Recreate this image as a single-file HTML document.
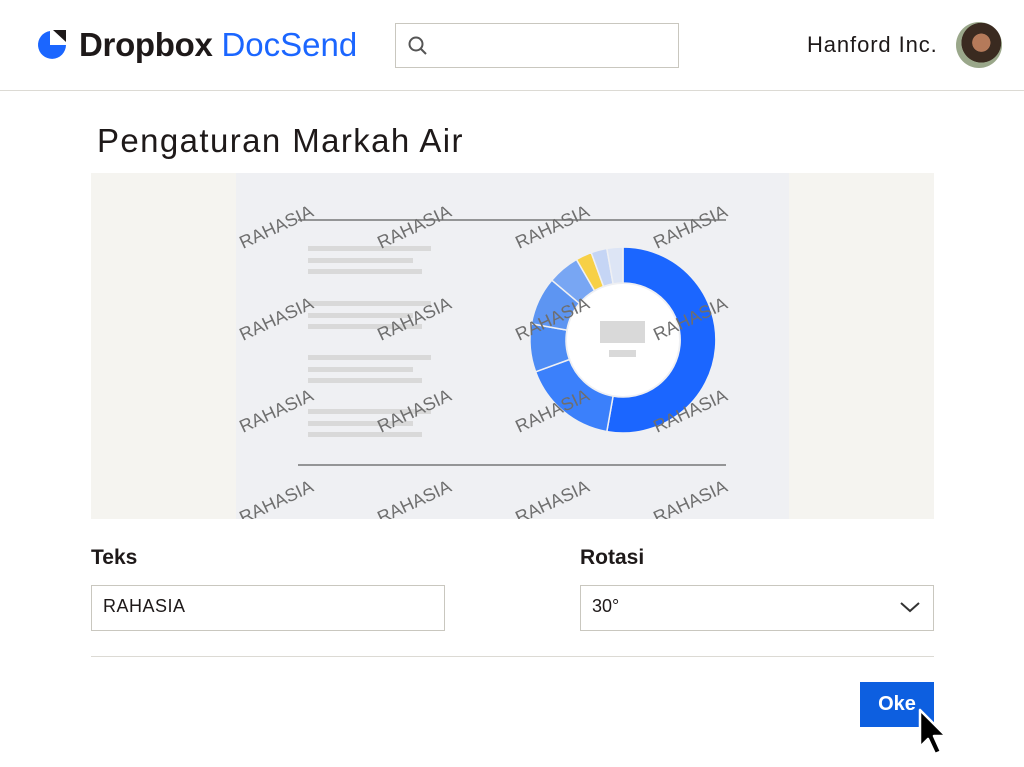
<!DOCTYPE html>
<html><head><meta charset="utf-8"><style>
body{margin:0;width:1024px;height:767px;background:#fff;font-family:"Liberation Sans",sans-serif;position:relative;overflow:hidden}
.a{position:absolute}
</style></head><body>
<svg class="a" style="left:36px;top:29px" width="32" height="32" viewBox="0 0 32 32"><path d="M14 2 A14 14 0 1 0 30 16 L14 16 Z" fill="#1b66ff"/><path d="M17 1 L30 1 L30 13 Z" fill="#1e1919"/></svg>
<div class="a" style="left:79px;top:26px;font-size:33px;font-weight:bold;color:#1e1919;letter-spacing:-0.3px">Dropbox <span style="font-weight:normal;color:#1b66ff;letter-spacing:0">DocSend</span></div>
<div class="a" style="left:395px;top:23px;width:284px;height:45px;border:1.5px solid #c9c7bf;box-sizing:border-box"></div>
<svg class="a" style="left:407px;top:35px" width="22" height="22" viewBox="0 0 22 22"><circle cx="9" cy="9" r="6.5" fill="none" stroke="#555" stroke-width="2"/><line x1="14" y1="14" x2="19" y2="19" stroke="#555" stroke-width="2"/></svg>
<div class="a" style="left:807px;top:32px;font-size:22px;color:#1e1919;letter-spacing:0.9px">Hanford Inc.</div>
<div class="a" style="left:956px;top:22px;width:46px;height:46px;border-radius:50%;background:radial-gradient(circle at 55% 45%,#b57a5a 0 25%,#3a2a20 26% 55%,#9aa78a 56%)"></div>
<div class="a" style="left:0;top:90px;width:1024px;height:1px;background:#dcdad4"></div>
<div class="a" style="left:97px;top:122px;font-size:33px;color:#1e1919;letter-spacing:1.4px">Pengaturan Markah Air</div>
<svg class="a" style="left:91px;top:173px" width="843" height="346" viewBox="91 173 843 346">
<rect x="91" y="173" width="843" height="346" fill="#f5f4f0"/>
<rect x="236" y="173" width="553" height="346" fill="#eff0f3"/>
<line x1="298" y1="220" x2="726" y2="220" stroke="#777" stroke-width="1.5"/>
<line x1="298" y1="465" x2="726" y2="465" stroke="#777" stroke-width="1.5"/>
<g fill="#d9d9d9">
<rect x="308" y="246" width="123" height="5"/><rect x="308" y="258" width="105" height="5"/><rect x="308" y="269" width="114" height="5"/>
<rect x="308" y="301" width="123" height="5"/><rect x="308" y="313" width="105" height="5"/><rect x="308" y="324" width="114" height="5"/>
<rect x="308" y="355" width="123" height="5"/><rect x="308" y="367" width="105" height="5"/><rect x="308" y="378" width="114" height="5"/>
<rect x="308" y="409" width="123" height="5"/><rect x="308" y="421" width="105" height="5"/><rect x="308" y="432" width="114" height="5"/>
</g>
<g stroke="#eff0f3" stroke-width="1.5">
<path d="M623 247 A93 93 0 1 1 606.8 431.6 L613.1 396.1 A57 57 0 1 0 623 283Z" fill="#1b66ff"/>
<path d="M606.8 431.6 A93 93 0 0 1 535.6 371.8 L569.4 359.5 A57 57 0 0 0 613.1 396.1Z" fill="#3b80fb"/>
<path d="M535.6 371.8 A93 93 0 0 1 531.4 323.8 L566.9 330.1 A57 57 0 0 0 569.4 359.5Z" fill="#4d8cf5"/>
<path d="M531.4 323.8 A93 93 0 0 1 551.8 280.2 L579.4 303.4 A57 57 0 0 0 566.9 330.1Z" fill="#5d95f2"/>
<path d="M551.8 280.2 A93 93 0 0 1 576.5 259.5 L594.5 290.6 A57 57 0 0 0 579.4 303.4Z" fill="#78a6f3"/>
<path d="M576.5 259.5 A93 93 0 0 1 591.2 252.6 L603.5 286.4 A57 57 0 0 0 594.5 290.6Z" fill="#f7d046"/>
<path d="M591.2 252.6 A93 93 0 0 1 606.8 248.4 L613.1 283.9 A57 57 0 0 0 603.5 286.4Z" fill="#c5d5f5"/>
<path d="M606.8 248.4 A93 93 0 0 1 623 247 L623 283 A57 57 0 0 0 613.1 283.9Z" fill="#dde5f5"/>
</g>
<circle cx="623" cy="340" r="56" fill="#fff"/>
<rect x="600" y="321" width="45" height="22" fill="#d9d9d9"/><rect x="609" y="350" width="27" height="7" fill="#d9d9d9"/>
<g font-family="Liberation Sans,sans-serif" font-size="18" fill="#6e6e6e">
<g id="c"><text transform="translate(243,249) rotate(-25)">RAHASIA</text><text transform="translate(243,341) rotate(-25)">RAHASIA</text><text transform="translate(243,433) rotate(-25)">RAHASIA</text><text transform="translate(243,524) rotate(-25)">RAHASIA</text></g>
<use href="#c" x="138"/><use href="#c" x="276"/><use href="#c" x="414"/>
</g>
</svg>
<div class="a" style="left:91px;top:546px;font-size:21px;font-weight:bold;color:#1e1919">Teks</div>
<div class="a" style="left:580px;top:546px;font-size:21px;font-weight:bold;color:#1e1919">Rotasi</div>
<div class="a" style="left:91px;top:585px;width:354px;height:46px;border:1.5px solid #c9c7bf;box-sizing:border-box;padding:10px 11px;font-size:18px;color:#1e1919;letter-spacing:0.5px">RAHASIA</div>
<div class="a" style="left:580px;top:585px;width:354px;height:46px;border:1.5px solid #c9c7bf;box-sizing:border-box;padding:10px 11px;font-size:18px;color:#1e1919">30°</div>
<svg class="a" style="left:899px;top:600px" width="22" height="14"><path d="M2 3 L11 11 L20 3" fill="none" stroke="#333" stroke-width="2"/></svg>
<div class="a" style="left:91px;top:656px;width:843px;height:1px;background:#dcdad4"></div>
<div class="a" style="left:860px;top:682px;width:74px;height:45px;background:#0d5fe0;color:#fff;font-size:20px;font-weight:bold;text-align:center;line-height:45px">Oke</div>
<svg class="a" style="left:914px;top:706px" width="40" height="54" viewBox="0 0 40 54"><path d="M6 4 L6 41 L14 33 L21 48 L27 45.5 L20 30 L32 30 Z" fill="#000" stroke="#fff" stroke-width="2.5" stroke-linejoin="round"/></svg>
</body></html>
